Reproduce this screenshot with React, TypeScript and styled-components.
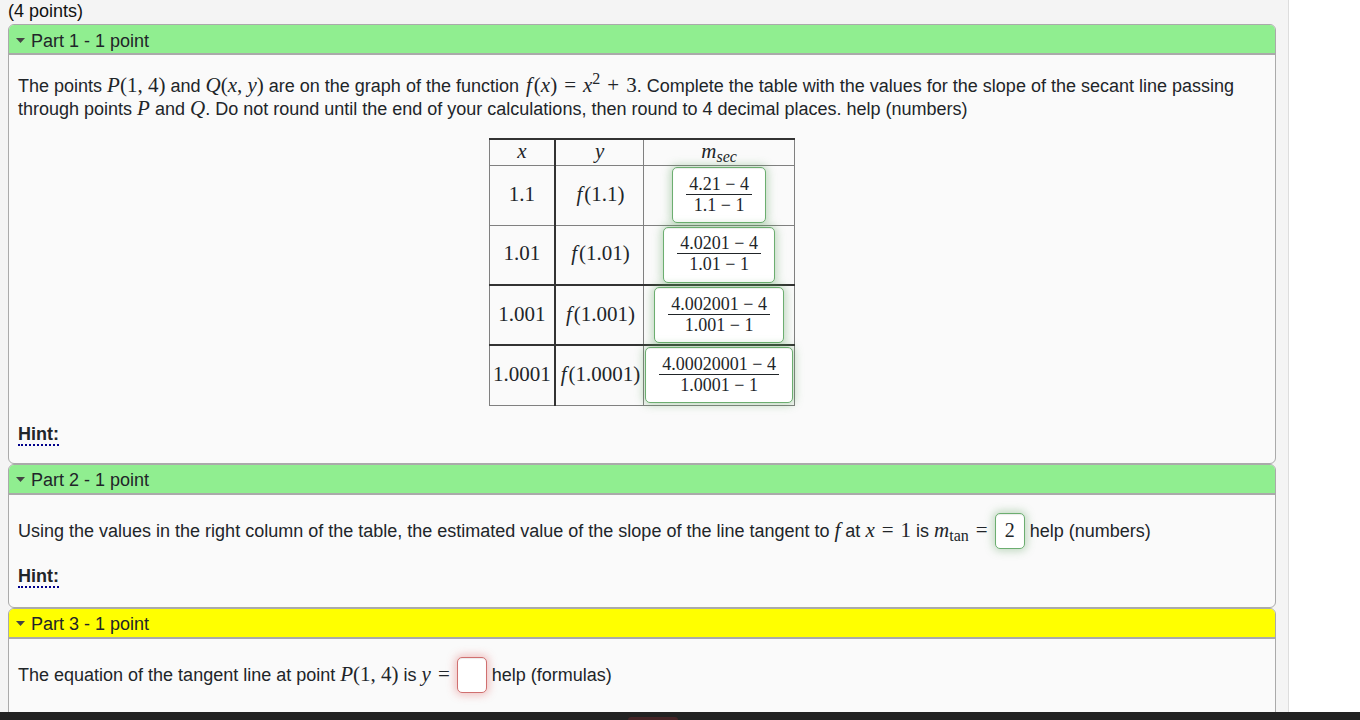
import React, { useState } from "react";
import styled, { createGlobalStyle } from "styled-components";

const Global = createGlobalStyle`
  * { box-sizing: border-box; }
  body {
    margin: 0;
    background: #fff;
    color: #212529;
    font-family: "Liberation Sans", Arial, sans-serif;
    font-size: 18px;
    line-height: 23px;
  }
`;

const Page = styled.div`
  display: flex;
  flex-direction: column;
  height: 100vh;
`;

const Problem = styled.main`
  flex: 1;
  min-height: 0;
  overflow: hidden;
  margin-right: 71px;
  padding: 0 12px 0 8px;
  background: #f4f4f4;
  border-right: 1px solid #ddd;
`;

const Points = styled.p`
  margin: 0;
  height: 24px;
  color: #111;
`;

const Panel = styled.section`
  background: #fafafa;
  border: 1px solid #aaa;
  border-radius: 6px;
  overflow: hidden;
`;

const Heading = styled.h2`
  margin: 0;
  font: inherit;
`;

const Toggle = styled.button<{ $color: string }>`
  display: flex;
  align-items: center;
  gap: 6px;
  width: 100%;
  height: 30px;
  padding: 4px 7px 0;
  border: 0;
  border-bottom: 2px solid #aaa;
  background: ${(p) => p.$color};
  color: inherit;
  font: inherit;
  text-align: left;
  cursor: pointer;
`;

const Arrow = styled.svg<{ $open: boolean }>`
  width: 9px;
  height: 9px;
  fill: #444;
  transform: ${(p) => (p.$open ? "none" : "rotate(-90deg)")};
`;

const Body = styled.div`
  min-height: 112px;
  padding: 18px 9px 16px;
`;

const Paragraph = styled.p`
  margin: 0;
  padding-top: 2px;
`;

const AnswerLine = styled.p`
  display: flex;
  align-items: baseline;
  margin: 0 0 17px;
  height: 36px;
  white-space: pre;
`;

const Link = styled.a`
  color: inherit;
  text-decoration: none;
`;

const Hint = styled.a`
  display: inline-block;
  color: inherit;
  font-weight: bold;
  line-height: 20px;
  vertical-align: top;
  text-decoration: none;
  border-bottom: 2px dotted #00008b;
`;

const MathText = styled.span`
  font-family: "Liberation Serif", "Times New Roman", serif;
  font-size: 21px;
  line-height: 20px;
  white-space: nowrap;
  sub, sup { font-size: 16px; line-height: 0; }
  sub { vertical-align: -4px; }
  sup { vertical-align: 8px; }
`;

const Rel = styled.span`
  margin: 0 7px;
`;

const FuncName = styled.i`
  margin: 0 2px;
`;

const Table = styled.table`
  margin: 17px auto 18px;
  border-collapse: collapse;
  border: 1px solid #808080;
  border-top: 2px solid #333;
  text-align: center;
`;

const Row = styled.tr<{ $dark?: boolean }>`
  height: 60px;
  border-bottom: ${(p) => (p.$dark ? "2px solid #333" : "1px solid #808080")};
`;

const HeadRow = styled(Row)`
  height: 26px;
`;

const Head = styled.th<{ $dark?: boolean }>`
  padding: 0 1px;
  font-weight: normal;
  border-right: ${(p) => (p.$dark ? "2px solid #333" : "1px solid #808080")};
`;

const Cell = styled.td<{ $dark?: boolean }>`
  padding: 1px 3px;
  border-right: ${(p) => (p.$dark ? "2px solid #333" : "1px solid #808080")};
`;

const AnswerCell = styled(Cell)`
  padding: 1px;
  line-height: 20px;
`;

const AnswerBox = styled.span`
  display: inline-flex;
  align-items: center;
  height: 56px;
  padding: 0 13px 2px;
  background: #fff;
  border: 1px solid #6cae70;
  border-radius: 5px;
  box-shadow: inset 0 1px 1px rgba(0, 0, 0, 0.08), 0 0 8px 2px rgba(81, 153, 81, 0.35);
  vertical-align: middle;
`;

const Fraction = styled.span`
  display: flex;
  flex-direction: column;
  font-family: "Liberation Serif", "Times New Roman", serif;
  line-height: 20px;
  white-space: nowrap;
`;

const Numerator = styled.span`
  padding: 0 3px;
  border-bottom: 1px solid #212529;
`;

const Field = styled.input<{ $ok?: boolean }>`
  width: 30px;
  height: 36px;
  margin-right: 5px;
  padding: 0;
  text-align: center;
  font-family: "Liberation Serif", "Times New Roman", serif;
  font-size: 20px;
  color: inherit;
  background: #fff;
  border: 1px solid ${(p) => (p.$ok ? "#6cae70" : "#d07070")};
  border-radius: 5px;
  box-shadow: inset 0 1px 1px rgba(0, 0, 0, 0.08),
    0 0 8px 2px ${(p) => (p.$ok ? "rgba(81, 153, 81, 0.35)" : "rgba(220, 80, 80, 0.35)")};
`;

const Bar = styled.footer`
  display: flex;
  align-items: flex-end;
  flex: none;
  height: 8px;
  padding-left: 628px;
  background: #222;
`;

const BarTab = styled.div`
  width: 50px;
  height: 3px;
  border-radius: 3px 3px 0 0;
  background: #452426;
`;

const rows = [
  { x: "1.1", num: "4.21 − 4", den: "1.1 − 1" },
  { x: "1.01", num: "4.0201 − 4", den: "1.01 − 1" },
  { x: "1.001", num: "4.002001 − 4", den: "1.001 − 1" },
  { x: "1.0001", num: "4.00020001 − 4", den: "1.0001 − 1" },
];

function Part({ title, color, children }: { title: string; color: string; children: React.ReactNode }) {
  const [open, setOpen] = useState(true);
  return (
    <Panel>
      <Heading>
        <Toggle $color={color} aria-expanded={open} onClick={() => setOpen(!open)}>
          <Arrow $open={open} viewBox="0 0 9 9" aria-hidden="true">
            <path d="M0 1h9L4.500 6z" />
          </Arrow>
          {title}
        </Toggle>
      </Heading>
      {open && <Body>{children}</Body>}
    </Panel>
  );
}

export default function App() {
  return (
    <Page>
      <Global />
      <Problem>
        <Points>(4 points)</Points>
        <Part title="Part 1 - 1 point" color="#90ee90">
          <Paragraph>
            The points <MathText><i>P</i>(1, 4)</MathText> and{" "}
            <MathText><i>Q</i>(<i>x</i>, <i>y</i>)</MathText> are on the graph of the function{" "}
            <MathText>
              <FuncName>f</FuncName>(<i>x</i>)<Rel>=</Rel><i>x</i><sup>2</sup><Rel>+</Rel>3
            </MathText>
            . Complete the table with the values for the slope of the secant line passing through points{" "}
            <MathText><i>P</i></MathText> and <MathText><i>Q</i></MathText>. Do not round until the end of
            your calculations, then round to 4 decimal places. <Link href="#numbers">help (numbers)</Link>
          </Paragraph>
          <Table>
            <thead>
              <HeadRow>
                <Head $dark><MathText><i>x</i></MathText></Head>
                <Head><MathText><i>y</i></MathText></Head>
                <Head><MathText><i>m</i><sub><i>sec</i></sub></MathText></Head>
              </HeadRow>
            </thead>
            <tbody>
              {rows.map((r, i) => (
                <Row key={r.x} $dark={i === 1 || i === 2}>
                  <Cell $dark><MathText>{r.x}</MathText></Cell>
                  <Cell><MathText><FuncName>f</FuncName>({r.x})</MathText></Cell>
                  <AnswerCell>
                    <AnswerBox>
                      <Fraction>
                        <Numerator>{r.num}</Numerator>
                        <span>{r.den}</span>
                      </Fraction>
                    </AnswerBox>
                  </AnswerCell>
                </Row>
              ))}
            </tbody>
          </Table>
          <Hint href="#hint-1">Hint:</Hint>
        </Part>
        <Part title="Part 2 - 1 point" color="#90ee90">
          <AnswerLine>
            <span>Using the values in the right column of the table, the estimated value of the slope of the line tangent to </span>
            <MathText><i>f</i></MathText> at <MathText><i>x</i><Rel>=</Rel>1</MathText> is{" "}
            <MathText><i>m</i><sub>tan</sub><Rel>=</Rel></MathText>
            <Field $ok aria-label="Slope of the tangent line" defaultValue="2" />
            <Link href="#numbers">help (numbers)</Link>
          </AnswerLine>
          <Hint href="#hint-2">Hint:</Hint>
        </Part>
        <Part title="Part 3 - 1 point" color="#ffff00">
          <AnswerLine>
            The equation of the tangent line at point <MathText><i>P</i>(1, 4)</MathText> is{" "}
            <MathText><i>y</i><Rel>=</Rel></MathText>
            <Field aria-label="Equation of the tangent line" />
            <Link href="#formulas">help (formulas)</Link>
          </AnswerLine>
        </Part>
      </Problem>
      <Bar>
        <BarTab />
      </Bar>
    </Page>
  );
}
